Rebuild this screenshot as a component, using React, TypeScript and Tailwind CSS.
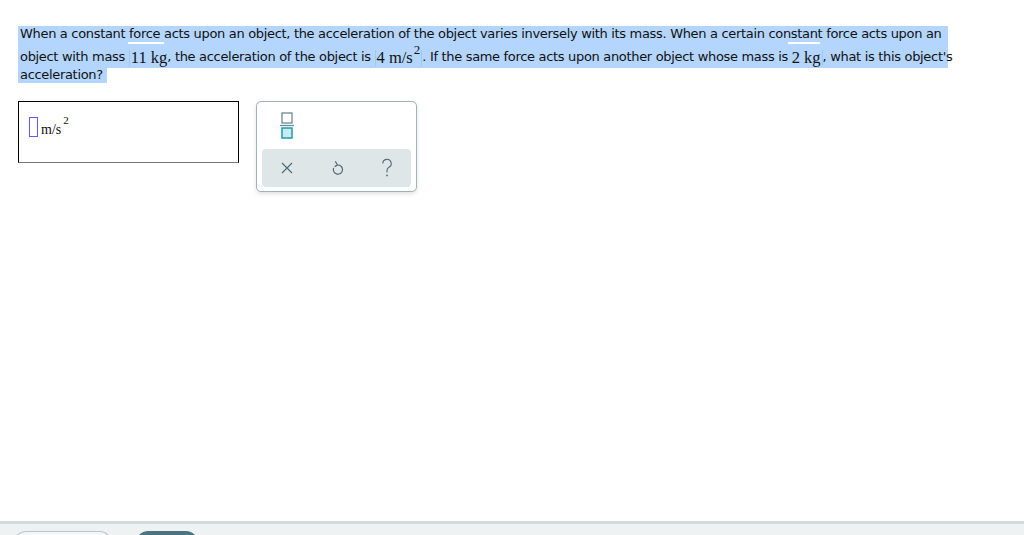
import React from 'react';

const hl = 'bg-[#b4d6fe]';
const mathCls = "font-['Liberation_Serif',serif] text-[16.5px] leading-none tracking-normal";

const Keypad: React.FC = () => (
  <div className="w-[161px] h-[91px] rounded-[5px] border border-[#9fb3b9] bg-white shadow-[0_2px_4px_rgba(0,0,0,0.12)] flex flex-col px-[5px] pb-[4px]">
    <div className="h-[47px] flex items-start pl-[17px] pt-[9px]">
      <svg width="16" height="28" viewBox="0 0 16 28">
        <rect x="3" y="2" width="10" height="10" fill="white" stroke="#6d8a93" strokeWidth="1.3" />
        <line x1="1" y1="14.5" x2="15" y2="14.5" stroke="#6d8a93" strokeWidth="1.3" />
        <rect x="3" y="17" width="10" height="10" fill="#c9ebf1" stroke="#1a9db3" strokeWidth="1.5" />
      </svg>
    </div>
    <div className="flex-1 rounded-[4px] bg-[#dfe6e8] flex items-center justify-between px-[18px] text-[#4e6c76]">
      <svg width="14" height="14" viewBox="0 0 14 14">
        <path d="M2 2 L12 12 M12 2 L2 12" stroke="currentColor" strokeWidth="1.2" fill="none" />
      </svg>
      <svg width="14" height="18" viewBox="0 0 14 18">
        <path d="M6.5 6 A4.6 4.6 0 1 1 2.6 9" stroke="currentColor" strokeWidth="1.2" fill="none" />
        <path d="M4.3 2.4 L6.5 6 L3.6 7.6" stroke="currentColor" strokeWidth="1.2" fill="none" />
      </svg>
      <svg width="12" height="20" viewBox="0 0 12 20">
        <path d="M1.8 5.5 A4.2 4.2 0 1 1 7.6 9.4 C6.4 10.1 6 11 6 12.4 L6 14.5" stroke="currentColor" strokeWidth="1.1" fill="none" />
        <circle cx="6" cy="17.4" r="0.9" fill="currentColor" />
      </svg>
    </div>
  </div>
);

export default function App() {
  return (
    <div className="h-[535px] w-[1024px] bg-white flex flex-col overflow-hidden font-['DejaVu_Sans',sans-serif] text-[13px] tracking-[-0.32px] text-[#111]">
      <div className="pt-[26px] pl-[18px]">
        <div className={`${hl} w-[930px] h-[18px] leading-[15px] whitespace-nowrap pl-[2px] relative`}>
          When a constant force acts upon an object, the acceleration of the object varies inversely with its mass. When a certain constant force acts upon an
          <div className="absolute left-[110px] top-[16px] w-[36px] h-[2px] bg-white" />
          <div className="absolute left-[770px] top-[16px] w-[32px] h-[2px] bg-white" />
        </div>
        <div className={`${hl} w-[930px] h-[24px] whitespace-nowrap pl-[2px] flex items-end pb-[2px]`}>
          <span>object with mass&nbsp;</span>
          <span className={`${mathCls} border-l border-[#a3c6ee] pl-[1px]`}>11 kg</span>
          <span>, the acceleration of the object is&nbsp;</span>
          <span className={`${mathCls} border-l border-r border-[#a3c6ee] px-[1px]`}>
            4 m/s<sup className="text-[13px] relative -top-[9px] ml-[1px]">2</sup>
          </span>
          <span>. If the same force acts upon another object whose mass is&nbsp;</span>
          <span className={`${mathCls} border-r border-[#a3c6ee] pr-[1px]`}>2 kg</span>
          <span>, what is this object's</span>
        </div>
        <div className={`${hl} w-fit h-[15px] leading-[13px] pl-[2px] pr-[4px]`}>acceleration?</div>
      </div>

      <div className="flex items-start gap-[17px] pl-[18px] pt-[18px]">
        <div className="w-[221px] h-[62px] border border-black border-b-[#777] flex items-start pl-[10px] pt-[15px]">
          <div className="w-[9px] h-[20px] border border-[#5c5cff] mr-[3px]" />
          <span className="font-['Liberation_Serif',serif] text-[14px] tracking-normal leading-none mt-[6px]">
            m/s<sup className="text-[11px] relative -top-[10px] ml-[2px]">2</sup>
          </span>
        </div>
        <Keypad />
      </div>

      <div className="mt-auto h-[14px] border-t-[3px] border-[#d3dadd] bg-[#eef2f3] flex items-start gap-[24px] pl-[14px] pt-[7px]">
        <div className="w-[98px] h-[12px] rounded-t-full border border-[#b9c7cc] bg-[#f4f7f8]" />
        <div className="w-[62px] h-[12px] rounded-t-full bg-[#4b7480]" />
      </div>
    </div>
  );
}
